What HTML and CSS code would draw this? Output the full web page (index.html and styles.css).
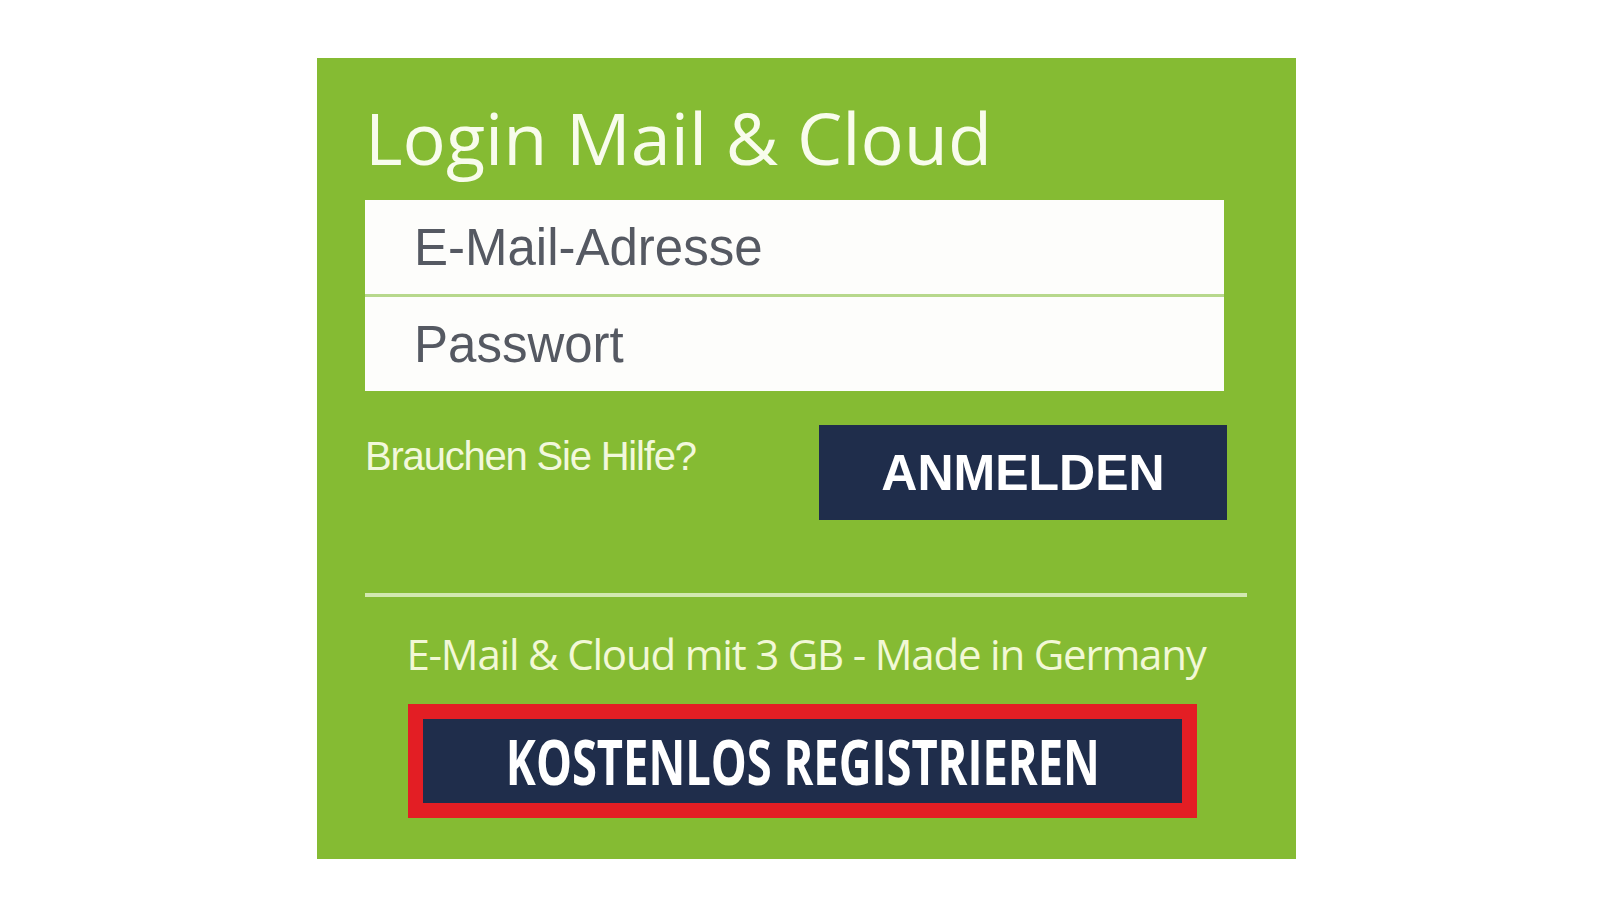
FILE: index.html
```html
<!DOCTYPE html>
<html lang="de">

<head>
    <meta charset="UTF-8">
    <meta name="viewport" content="width=device-width, initial-scale=1.0">
    <title>Login Mail &amp; Cloud</title>
    <link rel="stylesheet" href="styles.css">
</head>

<body>
<main class="login-box">

    <!-- heading -->
    <h1 class="login-title">Login Mail &amp; Cloud</h1>

    <!-- credentials -->
    <form class="login-form" onsubmit="return false;">
        <div class="login-fields">
            <input class="login-input login-input-mail" type="email" placeholder="E-Mail-Adresse">
            <input class="login-input" type="password" placeholder="Passwort">
        </div>

        <div class="login-actions">
            <a class="login-help" href="#">Brauchen Sie Hilfe?</a>
            <button class="login-submit" type="submit">ANMELDEN</button>
        </div>
    </form>

    <hr class="login-divider">

    <!-- registration -->
    <p class="login-tagline">E-Mail &amp; Cloud mit 3 GB - Made in Germany</p>

    <div class="register-frame">
        <a class="register-button" href="#"><span>KOSTENLOS REGISTRIEREN</span></a>
    </div>
</main>
</body>

</html>
```
FILE: styles.css
```css
body {
    margin: 0;
    background-color: #ffffff;
    font-family: Arial, "Liberation Sans", sans-serif;
}

.login-box {
    width: 979px;
    box-sizing: border-box;
    margin: 58px 0 0 317px;
    padding: 43px 49px 41px 48px;
    background-color: #85bb33;
}

.login-title {
    margin: 0;
    font-family: "Open Sans", sans-serif;
    font-weight: 400;
    font-size: 72px;
    line-height: 73px;
    color: #f8fcec;
}

.login-form {
    width: 862px;
    margin: 26px 0 0;
}

.login-fields {
    width: 859px;
}

.login-input {
    display: block;
    width: 100%;
    height: 94px;
    box-sizing: border-box;
    margin: 0;
    padding: 0 0 0 49px;
    border: none;
    outline: none;
    background-color: #fdfdfb;
    font-family: "Liberation Sans", Arial, sans-serif;
    font-size: 51px;
    color: #333333;
}

.login-input-mail {
    height: 97px;
    border-bottom: 3px solid #b7d88c;
}

.login-input::placeholder {
    color: #555962;
    opacity: 1;
}

.login-actions {
    display: flex;
    justify-content: space-between;
    align-items: flex-start;
    margin-top: 34px;
}

.login-help {
    margin-top: 8px;
    font-family: "Liberation Sans", Arial, sans-serif;
    font-size: 40px;
    line-height: 46px;
    letter-spacing: -1.2px;
    color: #f2f8dc;
    text-decoration: none;
}

.login-submit {
    width: 408px;
    height: 95px;
    border: none;
    background-color: #1f2d4b;
    color: #ffffff;
    font-family: "Liberation Sans", Arial, sans-serif;
    font-weight: 700;
    font-size: 50px;
    cursor: pointer;
}

.login-divider {
    height: 4px;
    margin: 73px 0 0;
    border: none;
    background-color: #d3e8b0;
}

.login-tagline {
    margin: 29px 0 0;
    text-align: center;
    font-family: "Open Sans", sans-serif;
    font-size: 42px;
    line-height: 56px;
    letter-spacing: -1.2px;
    color: #f2f8d6;
}

.register-frame {
    width: 789px;
    box-sizing: border-box;
    margin: 22px 0 0 43px;
    border: 15px solid #e31e24;
    background-color: #1f2d4b;
}

.register-button {
    display: flex;
    justify-content: center;
    height: 84px;
    text-decoration: none;
    color: #ffffff;
    font-family: "Open Sans", sans-serif;
    font-weight: 700;
    font-size: 62px;
    line-height: 84px;
    white-space: nowrap;
}

.register-button span {
    transform: scaleX(0.73);
}
```
